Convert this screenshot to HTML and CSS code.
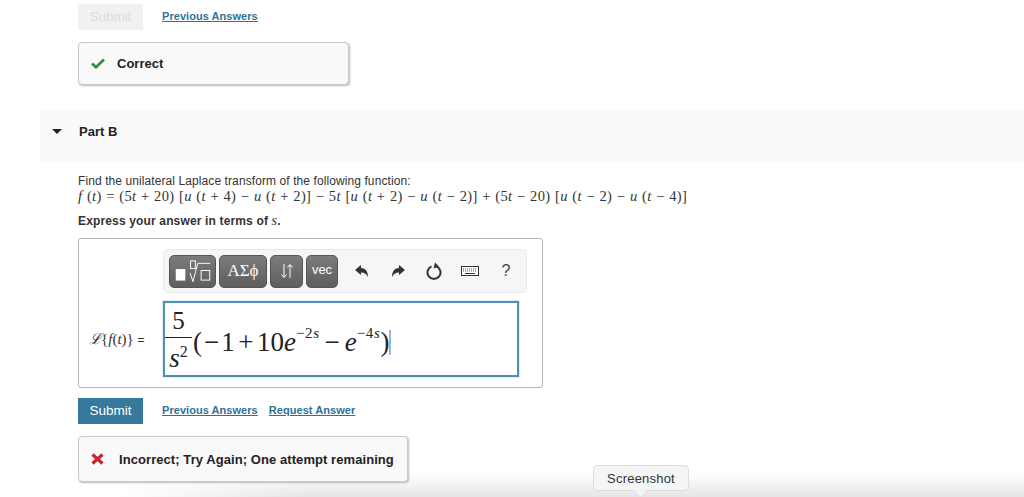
FILE: index.html
```html
<!DOCTYPE html>
<html lang="en">
<head>
<meta charset="utf-8">
<title>Part B</title>
<link rel="stylesheet" href="styles.css">
</head>
<body>
<div class="page">
  <div class="indent">
    <div class="actions first">
      <span class="btn disabled">Submit</span>
      <a class="link">Previous Answers</a>
    </div>
    <div class="feedback correct">
      <svg class="mark" width="14" height="11" viewBox="0 0 14 11"><path d="M1 5.500 L5 9.200 L13 1.600" fill="none" stroke="#3b8a45" stroke-width="2.800"/></svg>
      <span>Correct</span>
    </div>
  </div>
  <div class="part">
    <svg class="caret" width="10" height="5" viewBox="0 0 10 5"><path d="M0 0H10L5 5Z" fill="#222"/></svg>
    <span>Part B</span>
  </div>
  <div class="indent">
    <p class="prompt">Find the unilateral Laplace transform of the following function:</p>
    <p class="formula"><i>f</i> (<i>t</i>) = (5<i>t</i> + 20) [<i>u</i> (<i>t</i> + 4) − <i>u</i> (<i>t</i> + 2)] − 5<i>t</i> [<i>u</i> (<i>t</i> + 2) − <i>u</i> (<i>t</i> − 2)] + (5<i>t</i> − 20) [<i>u</i> (<i>t</i> − 2) − <i>u</i> (<i>t</i> − 4)]</p>
    <p class="express">Express your answer in terms of <i class="var">s</i>.</p>
    <div class="answer">
      <div class="toolbar">
        <span class="tool t1">
          <svg width="47" height="32" viewBox="0 0 47 32"><rect x="6" y="14" width="10" height="12" fill="#fff"/><path d="M21 18l3 9 5-19h13" fill="none" stroke="#fff" stroke-width="1"/><rect x="21.500" y="5.500" width="5" height="8" fill="none" stroke="#fff" stroke-width="1"/><rect x="32.500" y="15.500" width="9" height="10" fill="none" stroke="#fff" stroke-width="1"/></svg>
        </span>
        <span class="tool t2">ΑΣϕ</span>
        <span class="tool t3">
          <svg width="14" height="16" viewBox="0 0 14 16"><path d="M4 1v13M1.500 11.500L4 14.500l2.500-3M10 15V2M7.500 4.500L10 1.500l2.500 3" fill="none" stroke="#fff" stroke-width="1"/></svg>
        </span>
        <span class="tool t4">vec</span>
        <span class="plain p1"><svg width="14" height="14" viewBox="0 0 14 14"><path d="M0 6L6 1v3c4 0 7 3 7 9-1.500-3-3.500-4.500-7-4.500V11Z" fill="#333"/></svg></span>
        <span class="plain"><svg width="14" height="14" viewBox="0 0 14 14"><path d="M14 6L8 1v3c-4 0-7 3-7 9 1.500-3 3.500-4.500 7-4.500V11Z" fill="#333"/></svg></span>
        <span class="plain"><svg width="16" height="18" viewBox="0 0 16 18"><path d="M5.500 4.400A6.500 6.500 0 1 0 10.500 4.400" fill="none" stroke="#333" stroke-width="2"/><path d="M9 0.500L13 4.500 7.500 6.500Z" fill="#333"/></svg></span>
        <span class="plain"><svg width="18" height="10" viewBox="0 0 18 10"><rect x="0.500" y="0.500" width="17" height="9" fill="#fff" stroke="#333"/><path d="M2 3h14M2 5h14" stroke="#555" stroke-width="1" stroke-dasharray="1 1"/><path d="M4 7.500h10" stroke="#333"/></svg></span>
        <span class="plain help">?</span>
      </div>
      <div class="equation">
        <span class="lhs"><i class="script">ℒ</i>{<i>f</i>(<i>t</i>)} <span class="eq">=</span></span>
        <div class="input">
          <span class="frac"><span class="num">5</span><span class="den"><i>s</i><sup>2</sup></span></span>
          <span class="expr">(<span class="op">−</span>1<span class="op plus">+</span>10<i>e</i><sup>−2<i>s</i></sup><span class="op wide">−</span><i>e</i><sup>−4<i>s</i></sup>)</span><span class="cursor"></span>
        </div>
      </div>
    </div>
    <div class="actions second">
      <span class="btn primary">Submit</span>
      <a class="link">Previous Answers</a>
      <a class="link">Request Answer</a>
    </div>
    <div class="feedback incorrect">
      <svg class="mark" width="13" height="12" viewBox="0 0 13 12"><path d="M1.500 1.500L11.500 10.500M11.500 1.500L1.500 10.500" fill="none" stroke="#c8252c" stroke-width="3.200"/></svg>
      <span>Incorrect; Try Again; One attempt remaining</span>
    </div>
  </div>
</div>
<div class="shade"></div>
<div class="tip">Screenshot</div>
</body>
</html>
```
FILE: styles.css
```css
html, body { margin: 0; padding: 0; height: 497px; overflow: hidden; background: #fff; }
body { font-family: "Liberation Sans", Arial, sans-serif; color: #222; position: relative; }
.page { padding: 4px 0 0 40px; position: relative; z-index: 1; }
.indent { padding-left: 38px; }
p { margin: 0; }
.actions { display: flex; align-items: center; height: 26px; }
.btn { width: 65px; height: 26px; line-height: 26px; text-align: center; font-size: 13.500px; margin-right: 19px; }
.disabled { background: #f1f1f1; color: #dcdcdc; }
.primary { background: #36799c; color: #fff; }
.link { color: #2d7397; font-size: 11px; font-weight: bold; text-decoration: underline; margin-right: 11px; letter-spacing: .05px; margin-top: -2px; }
.feedback { display: flex; align-items: center; box-sizing: border-box; background: #f9f9f9; border: 1px solid #c9c9c9; border-radius: 4px; box-shadow: 1px 1px 2px #bbb; font-size: 13px; font-weight: bold; color: #222; }
.correct { width: 271px; height: 43px; margin-top: 12px; padding-left: 12px; }
.correct .mark { margin-right: 12px; }
.part { display: flex; align-items: center; box-sizing: border-box; height: 52px; margin-top: 25px; padding: 0 0 10px 12px; background: #f9f9f9; font-size: 13px; font-weight: bold; }
.caret { margin-right: 17px; }
.prompt { font-size: 12px; margin-top: 12px; line-height: 14px; color: #333; letter-spacing: .09px; }
.formula { font-family: "Liberation Serif", serif; font-size: 14.500px; line-height: 16px; white-space: nowrap; color: #333; word-spacing: .6px; letter-spacing: .34px; }
.express { font-size: 12px; font-weight: bold; margin-top: 10px; line-height: 14px; color: #333; letter-spacing: .15px; }
.var { font-family: "Liberation Serif", serif; font-weight: normal; font-size: 14px; }
.answer { box-sizing: border-box; width: 465px; height: 150px; margin-top: 10px; border: 1px solid #b5b5b5; border-radius: 3px; padding: 10px 0 0 84px; }
.toolbar { display: flex; align-items: center; box-sizing: border-box; width: 364px; height: 44px; background: #f6f6f6; border: 1px solid #e8e8e8; border-radius: 5px; padding-left: 5px; }
.tool { display: flex; flex: none; align-items: center; justify-content: center; height: 33px; box-sizing: border-box; margin-right: 3px; background: linear-gradient(#7c7c7c, #5e5e5e); border: 1px solid #555; border-radius: 5px; color: #fff; }
.t1 { width: 47px; }
.t2 { width: 48px; font-family: "Liberation Serif", serif; font-size: 17px; }
.t3 { width: 33px; }
.t4 { width: 32px; font-size: 13px; padding-bottom: 3px; }
.plain { display: flex; align-items: center; justify-content: center; width: 36px; height: 31px; flex: none; }
.p1 { margin-left: 3px; }
.help { font-size: 16px; color: #444; }
.equation { display: flex; align-items: center; margin: 8px 0 0 -74px; }
.lhs { width: 74px; font-family: "Liberation Serif", serif; font-size: 15px; white-space: nowrap; color: #333; padding-left: 10px; margin-left: -10px; margin-top: -3px; box-sizing: content-box; }
.eq { font-family: "Liberation Sans", sans-serif; font-size: 12px; }
.script { font-size: 15px; }
.input { display: flex; align-items: center; box-sizing: border-box; width: 356px; height: 76px; background: #fff; border: 2px solid #4f8fb0; font-family: "Liberation Serif", serif; color: #222; box-shadow: 0 0 1px #4f8fb0; }
.frac { display: flex; flex-direction: column; align-items: center; width: 27px; margin-top: 2px; }
.num { height: 33px; line-height: 33px; border-bottom: 1px solid #222; width: 100%; text-align: center; font-size: 25px; }
.den { height: 38px; line-height: 40px; font-size: 27px; }
.den sup { font-size: 16px; vertical-align: 10px; line-height: 0; }
.expr { white-space: nowrap; font-size: 27px; margin: 6px 0 0 1px; }
.expr sup { font-size: 15px; vertical-align: 13px; line-height: 0; letter-spacing: .6px; }
.op { margin: 0 2px; }
.op.plus { margin: 0 3.500px; }
.op.wide { margin: 0 5px 0 5px; }
.cursor { width: 2px; height: 25px; background: #9fb4dc; margin-top: 6px; }
.second { margin-top: 10px; }
.incorrect { width: 330px; height: 46px; margin-top: 12px; padding-left: 12px; letter-spacing: .07px; }
.incorrect .mark { margin-right: 15px; }
.shade { position: absolute; left: 120px; right: 0; bottom: 0; height: 24px; background: linear-gradient(rgba(232,232,232,0), #e6e6e6); -webkit-mask-image: linear-gradient(to right, transparent, #000 180px); mask-image: linear-gradient(to right, transparent, #000 180px); }
.tip { position: absolute; z-index: 2; left: 593px; top: 465px; box-sizing: border-box; width: 96px; height: 26px; line-height: 25px; text-align: center; background: #f5f5f5; border: 1px solid #dedede; border-radius: 4px; font-family: "Liberation Sans", sans-serif; font-size: 13px; color: #333; letter-spacing: .2px; }
.tip::after { content: ""; position: absolute; left: 41px; bottom: -7px; width: 10px; height: 10px; background: #f5f5f5; border-right: 1px solid #dedede; border-bottom: 1px solid #dedede; transform: rotate(45deg) scale(.8); }
```
